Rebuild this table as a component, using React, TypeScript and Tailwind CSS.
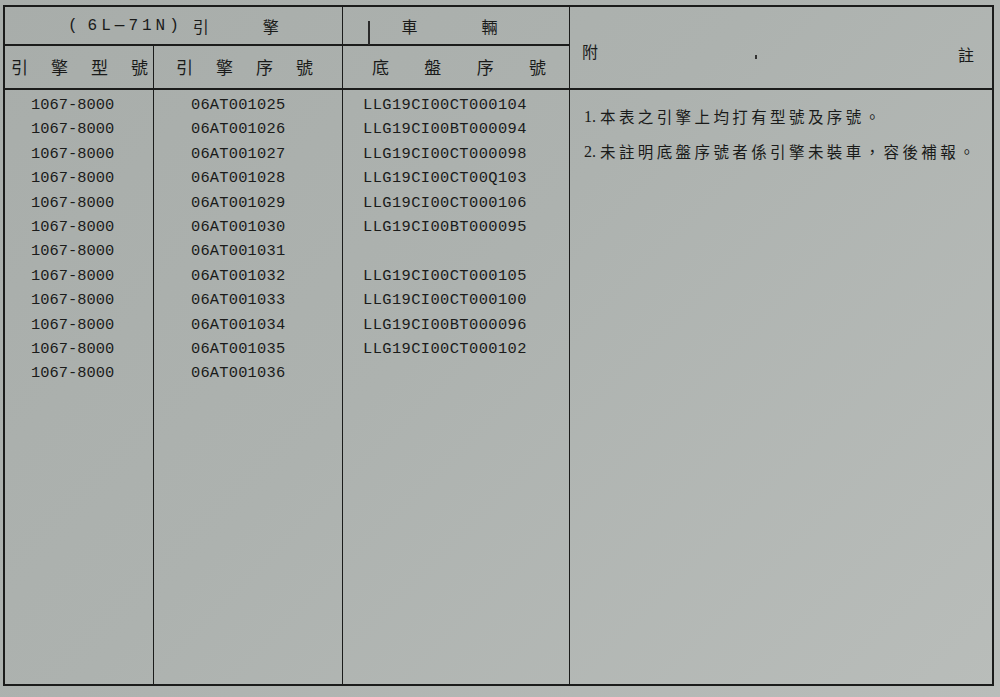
import React from "react";

const rows: [string, string, string][] = [
  ["1067-8000", "06AT001025", "LLG19CI00CT000104"],
  ["1067-8000", "06AT001026", "LLG19CI00BT000094"],
  ["1067-8000", "06AT001027", "LLG19CI00CT000098"],
  ["1067-8000", "06AT001028", "LLG19CI00CT00Q103"],
  ["1067-8000", "06AT001029", "LLG19CI00CT000106"],
  ["1067-8000", "06AT001030", "LLG19CI00BT000095"],
  ["1067-8000", "06AT001031", ""],
  ["1067-8000", "06AT001032", "LLG19CI00CT000105"],
  ["1067-8000", "06AT001033", "LLG19CI00CT000100"],
  ["1067-8000", "06AT001034", "LLG19CI00BT000096"],
  ["1067-8000", "06AT001035", "LLG19CI00CT000102"],
  ["1067-8000", "06AT001036", ""],
];

const notes = [
  ["1.", "本表之引擎上均打有型號及序號。"],
  ["2.", "未註明底盤序號者係引擎未裝車，容後補報。"],
];

const cjk = "font-['Noto_Sans_CJK_TC','Noto_Sans_CJK_JP',serif]";
const mono = "font-['Liberation_Mono','DejaVu_Sans_Mono',monospace]";

export default function App() {
  return (
    <div className="w-[1000px] h-[697px] overflow-hidden pt-[5px] pl-[3px] bg-[linear-gradient(135deg,#a8adaa_0%,#adb2af_45%,#b9bdba_100%)] text-[#1a1b1a]">
      <div className="w-[991px] h-[681px] box-border border-2 border-[#1b1c1b] grid grid-cols-[149px_189px_227px_1fr] grid-rows-[39px_44px_1fr]">
        {/* header row 1 */}
        <div className={`col-span-2 border-r-[1.5px] border-b-2 border-[#1b1c1b] flex items-center pl-[63px] text-[16px] ${cjk}`}>
          <span className={`${mono} text-[16px]`}>(</span>
          <span className={`${mono} text-[16px] tracking-[4px] ml-[10px]`}>6L—71N</span>
          <span className={`${mono} text-[16px]`}>)</span>
          <span className="ml-[14px]">引</span>
          <span className="ml-[54px]">擎</span>
        </div>
        <div className={`border-r-[1.5px] border-b-2 border-[#1b1c1b] flex items-center pl-[25px] text-[16px] ${cjk}`}>
          <span className="w-[1.5px] h-[24px] bg-[#2a2a2a] mt-[14px]" />
          <span className="ml-[32px]">車</span>
          <span className="ml-[64px]">輛</span>
        </div>
        <div className={`row-span-2 border-b-2 border-[#1b1c1b] flex items-start pt-[32px] pl-[12px] pr-[18px] text-[16px] ${cjk}`}>
          <span>附</span>
          <span className="w-[2px] h-[4px] bg-[#333] mt-[16px] ml-[157px]" />
          <span className="ml-auto mt-[3px]">註</span>
        </div>

        {/* header row 2 */}
        <div className={`border-r-[1.5px] border-b-2 border-[#1b1c1b] flex items-center justify-between pl-[6px] pr-[5px] text-[17px] ${cjk}`}>
          <span>引</span>
          <span>擎</span>
          <span>型</span>
          <span>號</span>
        </div>
        <div className={`border-r-[1.5px] border-b-2 border-[#1b1c1b] flex items-center justify-between pl-[22px] pr-[29px] text-[17px] ${cjk}`}>
          <span>引</span>
          <span>擎</span>
          <span>序</span>
          <span>號</span>
        </div>
        <div className={`border-r-[1.5px] border-b-2 border-[#1b1c1b] flex items-center justify-between pl-[29px] pr-[23px] text-[17px] ${cjk}`}>
          <span>底</span>
          <span>盤</span>
          <span>序</span>
          <span>號</span>
        </div>

        {/* body */}
        <div className={`border-r-[1.5px] border-[#1b1c1b] pt-[3px] pl-[26px] text-[15.4px] leading-[24.4px] ${mono}`}>
          {rows.map((r, i) => (
            <div key={i}>{r[0]}</div>
          ))}
        </div>
        <div className={`border-r-[1.5px] border-[#1b1c1b] pt-[3px] pl-[37px] text-[15.4px] leading-[24.4px] tracking-[0.2px] ${mono}`}>
          {rows.map((r, i) => (
            <div key={i}>{r[1]}</div>
          ))}
        </div>
        <div className={`border-r-[1.5px] border-[#1b1c1b] pt-[3px] pl-[20px] text-[15.4px] leading-[24.4px] tracking-[0.4px] ${mono}`}>
          {rows.map((r, i) => (
            <div key={i} className="h-[24.4px]">
              {r[2]}
            </div>
          ))}
        </div>
        <div className="pt-[9px] pl-[14px]">
          {notes.map(([n, t], i) => (
            <div key={i} className="flex items-center h-[35px]">
              <span className="font-['Liberation_Serif',serif] text-[16px] w-[16px]">{n}</span>
              <span className={`${cjk} text-[15.5px] tracking-[3.4px]`}>{t}</span>
            </div>
          ))}
        </div>
      </div>
    </div>
  );
}
